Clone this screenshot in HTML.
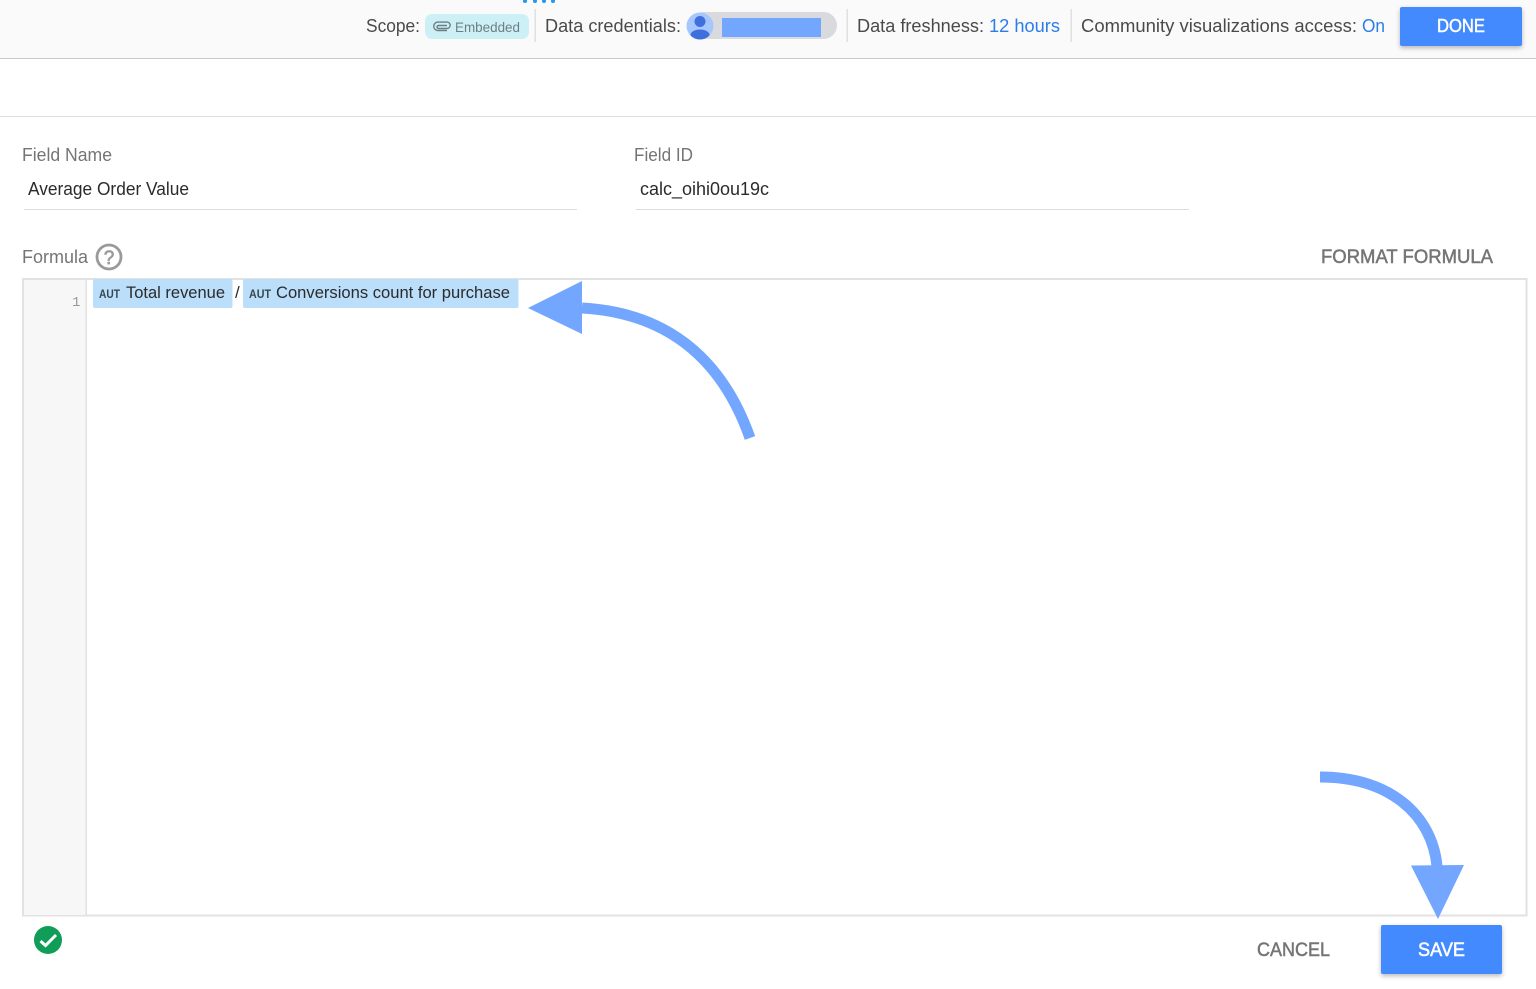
<!DOCTYPE html>
<html lang="en">
<head>
<meta charset="utf-8">
<title>Formula editor</title>
<style>
html,body{margin:0;padding:0;background:#fff;width:1536px;height:989px;overflow:hidden}
.btn{position:absolute;background:#448aff;border-radius:2px;box-shadow:0 2px 5px rgba(0,0,0,.28)}
svg{position:absolute;left:0;top:0}
text{font-family:"Liberation Sans",Arial,sans-serif}
.m{stroke-width:.5px}
</style>
</head>
<body>
<div style="position:absolute;left:0;top:0;width:1536px;height:58px;background:#fafafa;border-bottom:1px solid #c9c9c9"></div>
<div class="btn" style="left:1400px;top:7px;width:122px;height:39px"></div>
<div class="btn" style="left:1381px;top:925px;width:121px;height:49px"></div>
<svg width="1536" height="989" viewBox="0 0 1536 989">
  <defs><clipPath id="av"><circle cx="700" cy="26" r="13.500"/></clipPath></defs>
  <!-- top dots -->
  <g fill="#2196f3"><circle cx="525" cy="1" r="2"/><circle cx="535" cy="1" r="2"/><circle cx="544" cy="1" r="2"/><circle cx="553" cy="1" r="2"/></g>

  <!-- header -->
  <g font-size="18" fill="#4a4a4a">
    <text x="366" y="32" textLength="54" lengthAdjust="spacingAndGlyphs">Scope:</text>
    <text x="545" y="32" textLength="136" lengthAdjust="spacingAndGlyphs">Data credentials:</text>
    <text x="857" y="32" textLength="127" lengthAdjust="spacingAndGlyphs">Data freshness:</text>
    <text x="1081" y="32" textLength="276" lengthAdjust="spacingAndGlyphs">Community visualizations access:</text>
    <text x="989" y="32" textLength="71" lengthAdjust="spacingAndGlyphs" fill="#2a7de9">12 hours</text>
    <text x="1362" y="32" textLength="23" lengthAdjust="spacingAndGlyphs" fill="#2a7de9">On</text>
  </g>
  <rect x="425" y="14" width="104" height="25" rx="7" fill="#cdf0f7"/>
  <path d="M447 25.500h-8.500a1.500 1.500 0 0 0 0 3h8.500a3.200 3.200 0 0 0 0-6.400h-8.500a4.200 4.200 0 0 0-1 8.400h9.500" fill="none" stroke="#6d7f84" stroke-width="1.400"/>
  <text x="455" y="32" font-size="14" fill="#6d7f84" textLength="65" lengthAdjust="spacingAndGlyphs">Embedded</text>
  <rect x="534.500" y="9" width="1.500" height="33" fill="#e0e0e0"/>
  <rect x="846.500" y="9" width="1.500" height="33" fill="#e0e0e0"/>
  <rect x="1070.500" y="9" width="1.500" height="33" fill="#e0e0e0"/>
  <rect x="690" y="12" width="147" height="27" rx="13.500" fill="#d9dadd"/>
  <circle cx="700" cy="26" r="13.500" fill="#a6c6ff"/>
  <circle cx="700" cy="21.500" r="5.500" fill="#3f6fdc"/>
  <ellipse cx="700" cy="35" rx="9.500" ry="5.500" fill="#3f6fdc" clip-path="url(#av)"/>
  <rect x="722" y="18" width="99" height="19" fill="#72a6ff"/>
  <text x="1437" y="32" font-size="18" fill="#fff" stroke="#fff" class="m" textLength="48" lengthAdjust="spacingAndGlyphs">DONE</text>

  <rect x="0" y="116" width="1536" height="1" fill="#dfdfdf"/>

  <!-- fields -->
  <g font-size="18" fill="#757575">
    <text x="22" y="161" textLength="90" lengthAdjust="spacingAndGlyphs">Field Name</text>
    <text x="634" y="161" textLength="59" lengthAdjust="spacingAndGlyphs">Field ID</text>
    <text x="22" y="263" textLength="66" lengthAdjust="spacingAndGlyphs">Formula</text>
  </g>
  <g font-size="18" fill="#2b2b2b">
    <text x="28" y="195" textLength="161" lengthAdjust="spacingAndGlyphs">Average Order Value</text>
    <text x="640" y="195" textLength="129" lengthAdjust="spacingAndGlyphs">calc_oihi0ou19c</text>
  </g>
  <rect x="24" y="209" width="553" height="1" fill="#dcdcdc"/>
  <rect x="636" y="209" width="553" height="1" fill="#dcdcdc"/>

  <circle cx="109" cy="257" r="12" fill="none" stroke="#9a9a9a" stroke-width="2.800"/>
  <text x="109" y="264" font-size="19" fill="#9a9a9a" text-anchor="middle" stroke="#9a9a9a" stroke-width=".7">?</text>
  <text x="1321" y="263" font-size="19" fill="#757575" stroke="#757575" class="m" textLength="172" lengthAdjust="spacingAndGlyphs">FORMAT FORMULA</text>

  <!-- editor -->
  <rect x="23" y="279" width="1503.500" height="636.500" fill="#fff" stroke="#e2e2e2" stroke-width="2"/>
  <rect x="24" y="280" width="62" height="635" fill="#f7f7f7"/>
  <rect x="85.500" y="280" width="1.500" height="635" fill="#e2e2e2"/>
  <text x="72" y="306" font-size="14" fill="#999" style="font-family:'Liberation Mono',monospace">1</text>

  <rect x="93" y="279" width="139.500" height="29" rx="2" fill="#bbdefb"/>
  <rect x="243" y="279" width="275.500" height="29" rx="2" fill="#bbdefb"/>
  <g font-size="12" font-weight="bold" fill="#37474f">
    <text x="99" y="298" textLength="21" lengthAdjust="spacingAndGlyphs">AUT</text>
    <text x="249" y="298" textLength="22" lengthAdjust="spacingAndGlyphs">AUT</text>
  </g>
  <g font-size="17" fill="#2b2b2b">
    <text x="126" y="298" textLength="99" lengthAdjust="spacingAndGlyphs">Total revenue</text>
    <text x="235" y="298">/</text>
    <text x="276" y="298" textLength="234" lengthAdjust="spacingAndGlyphs">Conversions count for purchase</text>
  </g>

  <!-- arrows -->
  <path d="M750 438C724 364 672 313 582 308" fill="none" stroke="#72a6ff" stroke-width="11"/>
  <path d="M582 281V334L528 308Z" fill="#72a6ff"/>
  <path d="M1320 777C1390 777 1432 815 1437 866" fill="none" stroke="#72a6ff" stroke-width="11"/>
  <path d="M1411 865.500L1464 865L1438 919Z" fill="#72a6ff"/>

  <!-- status -->
  <circle cx="48" cy="940" r="14" fill="#0f9d58"/>
  <path d="M40.500 941l5 4.500L56 935" fill="none" stroke="#fff" stroke-width="3"/>

  <!-- footer -->
  <text x="1257" y="956" font-size="19" fill="#757575" stroke="#757575" class="m" textLength="73" lengthAdjust="spacingAndGlyphs">CANCEL</text>
  <text x="1418" y="956" font-size="19" fill="#fff" stroke="#fff" class="m" textLength="47" lengthAdjust="spacingAndGlyphs">SAVE</text>
</svg>
</body>
</html>
